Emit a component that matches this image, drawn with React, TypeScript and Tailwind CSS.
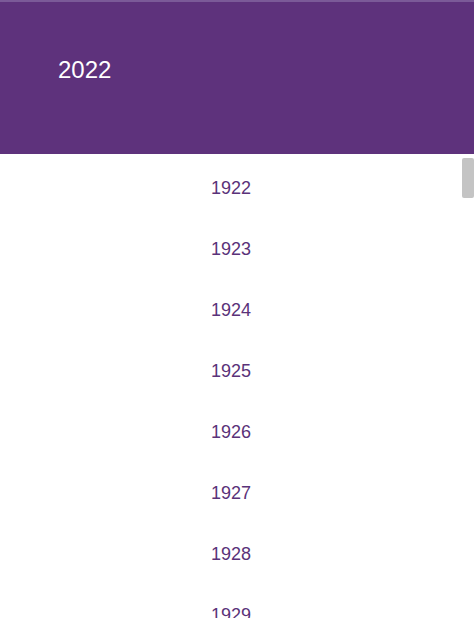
const years = Array.from({ length: 8 }, (_, i) => 1922 + i);

export default function App() {
  return (
    <div className="flex h-[620px] w-[474px] flex-col overflow-hidden bg-white font-['Liberation_Sans',Arial,sans-serif]">
      <header className="h-[154px] shrink-0 border-t-2 border-[#7b5a98] bg-[#5e327c] pl-[58px] pt-[50px]">
        <p className="text-[24px] text-white">2022</p>
      </header>

      <div className="flex h-[464px] shrink-0">
        <ul className="flex-1 overflow-hidden pt-[4px]">
          {years.map((y) => (
            <li key={y} className="flex h-[61px] items-center justify-center text-[18px] text-[#5a3279]">
              {y}
            </li>
          ))}
        </ul>
        <div className="w-[12px] shrink-0 pt-[4px]">
          <div className="h-[40px] w-full rounded-[2px] bg-[#c4c4c4]" />
        </div>
      </div>
    </div>
  );
}
